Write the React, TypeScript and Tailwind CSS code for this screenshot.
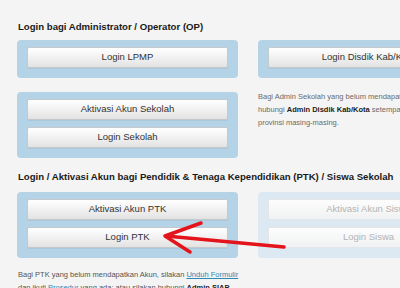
import React from "react";

function Btn({ children, faded }: { children: React.ReactNode; faded?: boolean }) {
  return (
    <div
      className={
        faded
          ? "h-[21px] rounded-[2px] border border-[#e2e6ea] bg-linear-to-b from-[#fdfdfd] to-[#f0f1f2] text-[9.5px] text-[#b4b4b4] flex items-center justify-center whitespace-nowrap"
          : "h-[21px] rounded-[2px] border border-[#c4c9cd] bg-linear-to-b from-white to-[#e3e3e3] text-[9.5px] text-[#333] flex items-center justify-center whitespace-nowrap shadow-[0_1px_0_rgba(0,0,0,0.05)]"
      }
    >
      {children}
    </div>
  );
}

function Box({ children, faded }: { children: React.ReactNode; faded?: boolean }) {
  return (
    <div
      className={
        (faded ? "bg-[#dce9f2] " : "bg-[#b4d3e7] ") +
        "w-[221px] shrink-0 rounded-[4px] px-[10px] pt-[7px] pb-[10px] flex flex-col gap-[7px]"
      }
    >
      {children}
    </div>
  );
}

export default function App() {
  return (
    <div className="relative w-[400px] h-[288px] overflow-hidden bg-[#f4f4f4] font-['Liberation_Sans',Arial,sans-serif]">
      <div className="pl-[17px] pt-[20px] w-[520px]">
        <h2 className="ml-px text-[9.6px] font-bold leading-[14px] text-[#1a1a1a] whitespace-nowrap">
          Login bagi Administrator / Operator (OP)
        </h2>
        <div className="mt-[6px] flex gap-[20px]">
          <Box>
            <Btn>Login LPMP</Btn>
          </Box>
          <Box>
            <Btn>Login Disdik Kab/Kota</Btn>
          </Box>
        </div>
        <div className="mt-[14px] flex gap-[20px]">
          <Box>
            <Btn>Aktivasi Akun Sekolah</Btn>
            <Btn>Login Sekolah</Btn>
          </Box>
          <div className="-mt-[2px] w-[240px] text-[7.5px] leading-[13px] text-[#6a6a6a]">
            <div className="whitespace-nowrap">Bagi Admin Sekolah yang belum mendapatkan Akun, silakan</div>
            <div className="whitespace-nowrap">
              hubungi <b className="text-[#222]">Admin Disdik Kab/Kota</b> setempat atau{" "}
              <b className="text-[#222]">Admin LPMP</b>
            </div>
            <div className="whitespace-nowrap">provinsi masing-masing.</div>
          </div>
        </div>
        <h2 className="mt-[12px] ml-px text-[9.6px] font-bold leading-[14px] text-[#1a1a1a] whitespace-nowrap">
          Login / Aktivasi Akun bagi Pendidik &amp; Tenaga Kependidikan (PTK) / Siswa Sekolah
        </h2>
        <div className="mt-[8px] flex gap-[20px]">
          <Box>
            <Btn>Aktivasi Akun PTK</Btn>
            <Btn>Login PTK</Btn>
          </Box>
          <Box faded>
            <Btn faded>Aktivasi Akun Siswa</Btn>
            <Btn faded>Login Siswa</Btn>
          </Box>
        </div>
        <div className="mt-[10px] ml-px text-[7.5px] leading-[13px] text-[#555]">
          <div className="whitespace-nowrap">
            Bagi PTK yang belum mendapatkan Akun, silakan{" "}
            <span className="text-[#2b8ab5] underline">Unduh Formulir</span>
          </div>
          <div className="whitespace-nowrap">
            dan ikuti <span className="text-[#2b8ab5] underline">Prosedur</span> yang ada; atau silakan hubungi{" "}
            <b className="text-[#222]">Admin SIAP</b>
          </div>
        </div>
      </div>
      <svg
        className="absolute left-0 top-0 pointer-events-none"
        width="400"
        height="288"
        viewBox="0 0 400 288"
      >
        <path
          d="M284 247 L166 236"
          stroke="#e3141b"
          strokeWidth="3.5"
          strokeLinecap="round"
          fill="none"
        />
        <path
          d="M201 223 L165 236 L190 252"
          stroke="#e3141b"
          strokeWidth="3.5"
          strokeLinecap="round"
          strokeLinejoin="round"
          fill="none"
        />
      </svg>
    </div>
  );
}
